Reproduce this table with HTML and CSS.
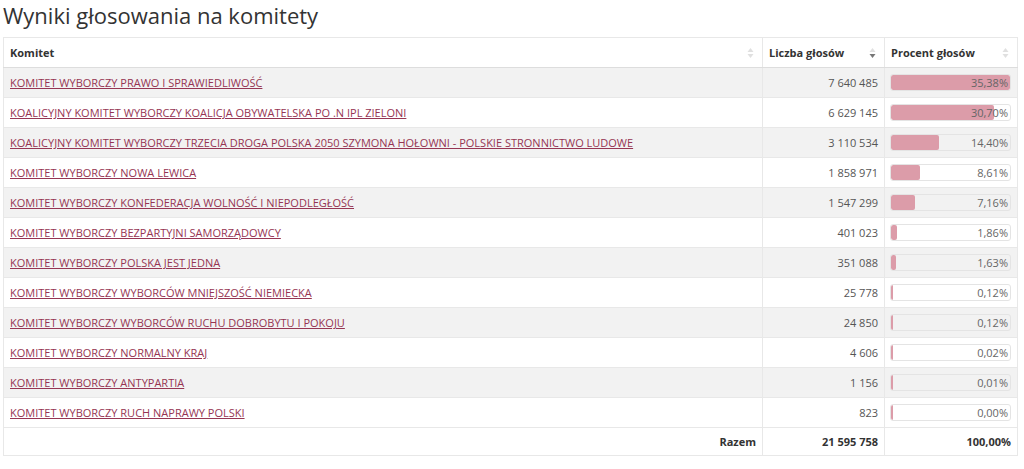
FILE: index.html
```html
<!DOCTYPE html>
<html lang="pl">
<head>
<meta charset="utf-8">
<title>Wyniki głosowania na komitety</title>
<link rel="stylesheet" href="styles.css">
</head>
<body>
<h1 class="title">Wyniki głosowania na komitety</h1>
<table class="results">
  <colgroup><col class="c-name"><col class="c-votes"><col class="c-pct"></colgroup>
  <thead>
    <tr>
      <th><div class="th-in">Komitet<svg class="sort" viewBox="0 0 7 12" width="7" height="12"><path d="M3.5 1 L6.5 5 H0.5Z" fill="#e0e0e0"/><path d="M3.5 11 L6.5 7 H0.5Z" fill="#e0e0e0"/></svg></div></th>
      <th><div class="th-in">Liczba głosów<svg class="sort" viewBox="0 0 7 12" width="7" height="12"><path d="M3.5 1 L6.5 5 H0.5Z" fill="#e0e0e0"/><path d="M3.5 11 L6.5 7 H0.5Z" fill="#777"/></svg></div></th>
      <th><div class="th-in">Procent głosów<svg class="sort" viewBox="0 0 7 12" width="7" height="12"><path d="M3.5 1 L6.5 5 H0.5Z" fill="#e0e0e0"/><path d="M3.5 11 L6.5 7 H0.5Z" fill="#e0e0e0"/></svg></div></th>
    </tr>
  </thead>
  <tbody>
    <tr><td><a href="#">KOMITET WYBORCZY PRAWO I SPRAWIEDLIWOŚĆ</a></td><td class="num">7 640 485</td><td><div class="bar"><div class="fill" style="width:100%"></div><span>35,38%</span></div></td></tr>
    <tr><td><a href="#">KOALICYJNY KOMITET WYBORCZY KOALICJA OBYWATELSKA PO .N IPL ZIELONI</a></td><td class="num">6 629 145</td><td><div class="bar"><div class="fill" style="width:86.77%"></div><span>30,70%</span></div></td></tr>
    <tr><td><a href="#">KOALICYJNY KOMITET WYBORCZY TRZECIA DROGA POLSKA 2050 SZYMONA HOŁOWNI - POLSKIE STRONNICTWO LUDOWE</a></td><td class="num">3 110 534</td><td><div class="bar"><div class="fill" style="width:40.70%"></div><span>14,40%</span></div></td></tr>
    <tr><td><a href="#">KOMITET WYBORCZY NOWA LEWICA</a></td><td class="num">1 858 971</td><td><div class="bar"><div class="fill" style="width:24.34%"></div><span>8,61%</span></div></td></tr>
    <tr><td><a href="#">KOMITET WYBORCZY KONFEDERACJA WOLNOŚĆ I NIEPODLEGŁOŚĆ</a></td><td class="num">1 547 299</td><td><div class="bar"><div class="fill" style="width:20.24%"></div><span>7,16%</span></div></td></tr>
    <tr><td><a href="#">KOMITET WYBORCZY BEZPARTYJNI SAMORZĄDOWCY</a></td><td class="num">401 023</td><td><div class="bar"><div class="fill" style="width:5.26%"></div><span>1,86%</span></div></td></tr>
    <tr><td><a href="#">KOMITET WYBORCZY POLSKA JEST JEDNA</a></td><td class="num">351 088</td><td><div class="bar"><div class="fill" style="width:4.61%"></div><span>1,63%</span></div></td></tr>
    <tr><td><a href="#">KOMITET WYBORCZY WYBORCÓW MNIEJSZOŚĆ NIEMIECKA</a></td><td class="num">25 778</td><td><div class="bar"><div class="fill" style="width:0.34%"></div><span>0,12%</span></div></td></tr>
    <tr><td><a href="#">KOMITET WYBORCZY WYBORCÓW RUCHU DOBROBYTU I POKOJU</a></td><td class="num">24 850</td><td><div class="bar"><div class="fill" style="width:0.34%"></div><span>0,12%</span></div></td></tr>
    <tr><td><a href="#">KOMITET WYBORCZY NORMALNY KRAJ</a></td><td class="num">4 606</td><td><div class="bar"><div class="fill" style="width:0.06%"></div><span>0,02%</span></div></td></tr>
    <tr><td><a href="#">KOMITET WYBORCZY ANTYPARTIA</a></td><td class="num">1 156</td><td><div class="bar"><div class="fill" style="width:0.03%"></div><span>0,01%</span></div></td></tr>
    <tr><td><a href="#">KOMITET WYBORCZY RUCH NAPRAWY POLSKI</a></td><td class="num">823</td><td><div class="bar"><div class="fill" style="width:0%"></div><span>0,00%</span></div></td></tr>
  </tbody>
  <tfoot>
    <tr><td class="num">Razem</td><td class="num">21 595 758</td><td class="num">100,00%</td></tr>
  </tfoot>
</table>
</body>
</html>
```
FILE: styles.css
```css
html, body {
  margin: 0;
  padding: 0;
  background: #fff;
}
body {
  padding: 0 3px;
  font-family: "Open Sans", "Noto Sans", sans-serif;
  color: #555;
}
.title {
  margin: 0 0 7px;
  font-size: 22px;
  font-weight: 400;
  line-height: 30px;
  color: #333;
}
.results {
  border-collapse: collapse;
  width: 1014px;
  table-layout: fixed;
  font-size: 11px;
  border: 1px solid #e8e8e8;
}
.c-name { width: 759px; }
.c-votes { width: 122px; }
.c-pct { width: 133px; }
.results th,
.results td {
  height: 30px;
  padding: 0 6px 0 6px;
  border-left: 1px solid #e8e8e8;
  border-top: 1px solid #e8e8e8;
  vertical-align: middle;
  box-sizing: border-box;
}
.results th {
  text-align: left;
  font-weight: 700;
  color: #333;
  border-bottom: 1px solid #ddd;
}
.th-in {
  display: flex;
  align-items: center;
  justify-content: space-between;
  padding-right: 2px;
}
.sort { flex: none; }
.results tbody tr:nth-child(odd) td { background: #f2f2f2; }
.results a {
  color: #963553;
  text-decoration: underline;
}
.num { text-align: right; }
.results tfoot td {
  font-weight: 700;
  color: #333;
  height: 28px;
}
.bar {
  position: relative;
  height: 17px;
  margin-left: -1px;
  border: 1px solid #e4e4e4;
  border-radius: 3px;
  box-sizing: border-box;
  overflow: hidden;
}
.fill {
  height: 100%;
  background: #dc9ca9;
  border-radius: 2px;
  min-width: 2px;
}
.bar span {
  position: absolute;
  right: 2px;
  top: 0;
  line-height: 15px;
  color: #666;
}
```
